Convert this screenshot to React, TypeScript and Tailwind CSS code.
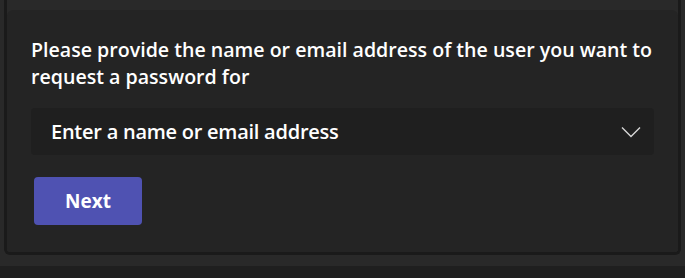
import { useState } from "react";

function Chevron() {
  return (
    <svg width="20" height="12" viewBox="0 0 20 12" fill="none" className="shrink-0">
      <path d="M1 1.5 L10 10.5 L19 1.5" stroke="#d6d6d6" strokeWidth="1.4" />
    </svg>
  );
}

export default function App() {
  const [value] = useState("");

  return (
    <div
      className="w-[685px] h-[278px] bg-[#292929] flex flex-col overflow-hidden"
      style={{ fontFamily: '"Open Sans", "Noto Sans", sans-serif' }}
    >
      <div className="mx-[4px] w-[677px] h-[255px] shrink-0 bg-[#292929] border-x-[3px] border-b-[3px] border-[#1a1a1a] rounded-b-[6px] flex flex-col">
        <div className="h-[10px] shrink-0" />
        <div className="flex-1 bg-[#242424] rounded-t-[6px] rounded-b-[4px] px-[24px] pt-[26px]">
          <p className="-mr-[8px] text-[19.6px] leading-[27px] font-semibold text-white">
            Please provide the name or email address of the user you want to request a password for
          </p>
          <div className="mt-[18px] h-[47px] bg-[#1f1f1f] rounded-[4px] flex items-center justify-between pl-[20px] pr-[13px]">
            <span className="text-[20px] font-semibold text-white tracking-[-0.25px]">
              {value || "Enter a name or email address"}
            </span>
            <Chevron />
          </div>
          <button className="block mt-[22px] ml-[3px] w-[108px] h-[48px] bg-[#4f52b2] rounded-[4px] text-white text-[19px] font-bold">
            Next
          </button>
        </div>
      </div>
      <div className="h-[11px] shrink-0" />
      <div className="flex-1 bg-[#1f1f1f]" />
    </div>
  );
}
